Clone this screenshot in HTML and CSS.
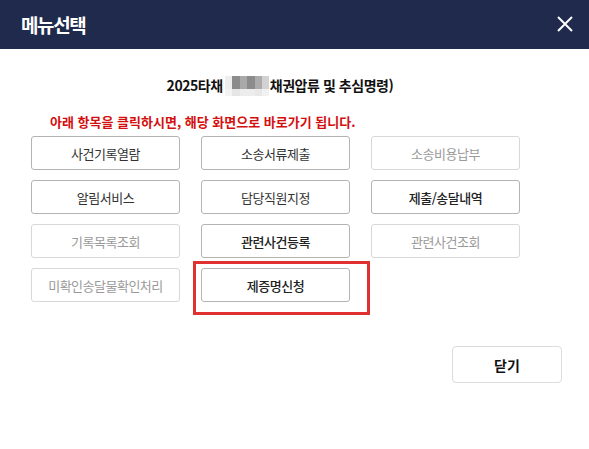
FILE: index.html
```html
<!DOCTYPE html>
<html lang="ko">
<head>
<meta charset="utf-8">
<title>메뉴선택</title>
<link rel="stylesheet" href="styles.css">
</head>
<body>
<div class="dialog">
  <header class="head">
    <h1 class="head-title">메뉴선택</h1>
    <button class="head-close" aria-label="닫기">
      <svg width="16" height="16" viewBox="0 0 16 16"><path d="M1 1 L15 15 M15 1 L1 15" stroke="#fff" stroke-width="2" fill="none"/></svg>
    </button>
  </header>
  <main class="body">
    <p class="case-title">2025타채<span class="blur"></span>채권압류 및 추심명령)</p>
    <p class="notice">아래 항목을 클릭하시면, 해당 화면으로 바로가기 됩니다.</p>
    <div class="menu-grid">
      <button class="menu-btn">사건기록열람</button>
      <button class="menu-btn">소송서류제출</button>
      <button class="menu-btn is-disabled">소송비용납부</button>
      <button class="menu-btn">알림서비스</button>
      <button class="menu-btn">담당직원지정</button>
      <button class="menu-btn is-strong">제출/송달내역</button>
      <button class="menu-btn is-disabled">기록목록조회</button>
      <button class="menu-btn is-strong">관련사건등록</button>
      <button class="menu-btn is-disabled">관련사건조회</button>
      <button class="menu-btn is-disabled">미확인송달물확인처리</button>
      <div class="menu-cell">
        <button class="menu-btn is-strong">제증명신청</button>
        <span class="highlight"></span>
      </div>
    </div>
    <div class="foot">
      <button class="close-btn">닫기</button>
    </div>
  </main>
</div>
</body>
</html>
```
FILE: styles.css
```css
* { box-sizing: border-box; }
html, body { margin: 0; padding: 0; background: #fff; }
body {
  font-family: "Noto Sans CJK KR", "Noto Sans", sans-serif;
  color: #222;
  width: 589px;
  height: 449px;
  overflow: hidden;
}
.head {
  height: 49px;
  background: #1f2a4d;
  display: flex;
  align-items: center;
  justify-content: space-between;
  padding: 0 16px 0 21px;
}
.head-title {
  margin: 0;
  font-size: 19px;
  font-weight: 700;
  color: #fff;
  letter-spacing: -1.4px;
  line-height: 20px;
}
.head-close {
  background: none;
  border: 0;
  padding: 0;
  width: 16px;
  height: 16px;
  display: block;
  margin-top: -2px;
}
.head-close svg { display: block; }
.body { padding: 26px 0 0 0; }
.case-title {
  margin: 0;
  padding-right: 29px;
  text-align: center;
  font-size: 14px;
  font-weight: 700;
  line-height: 20px;
  letter-spacing: -0.45px;
  color: #111;
}
.blur {
  display: inline-block;
  width: 44px;
  height: 20px;
  vertical-align: -5px;
  margin: 0 1px 0 2px;
  background:
    linear-gradient(90deg, #eeeeee 0 7px, #8c8c8c 7px 15px, #a9a9a9 15px 22px, #8c8c8c 22px 30px, #acacac 30px 37px, #d2d2d2 37px) top / 100% 13px no-repeat,
    linear-gradient(90deg, #f3f3f3 0 7px, #e6e6e6 7px 15px, #ededed 15px 30px, #e8e8e8 30px 37px, #f1f1f1 37px) bottom / 100% 7px no-repeat;
}
.notice {
  margin: 18px 0 0 50px;
  font-size: 13px;
  font-weight: 700;
  line-height: 16px;
  letter-spacing: 0;
  color: #d40f0f;
}
.menu-grid {
  margin: 6px 0 0 31px;
  display: grid;
  grid-template-columns: repeat(3, 149px);
  grid-template-rows: repeat(4, 34px);
  column-gap: 21px;
  row-gap: 10px;
}
.menu-cell { position: relative; height: 34px; }
.menu-btn {
  display: block;
  width: 149px;
  height: 34px;
  background: #fff;
  border: 1px solid #b4b4b4;
  border-radius: 3px;
  font-family: inherit;
  font-size: 13px;
  letter-spacing: -0.5px;
  color: #333;
  padding: 0;
  cursor: pointer;
}
.menu-btn.is-strong { color: #222; font-weight: 500; }
.menu-btn.is-disabled { color: #9a9a9a; border-color: #d8d8d8; }
.highlight {
  position: absolute;
  left: -8px;
  top: -7px;
  width: 177px;
  height: 54px;
  border: 3px solid #e03131;
  pointer-events: none;
}
.foot {
  display: flex;
  justify-content: flex-end;
  padding-right: 27px;
  margin-top: 44px;
}
.close-btn {
  width: 110px;
  height: 37px;
  background: #fff;
  border: 1px solid #dcdcdc;
  border-radius: 4px;
  font-family: inherit;
  font-size: 14px;
  font-weight: 700;
  color: #111;
  padding: 0;
}
```
